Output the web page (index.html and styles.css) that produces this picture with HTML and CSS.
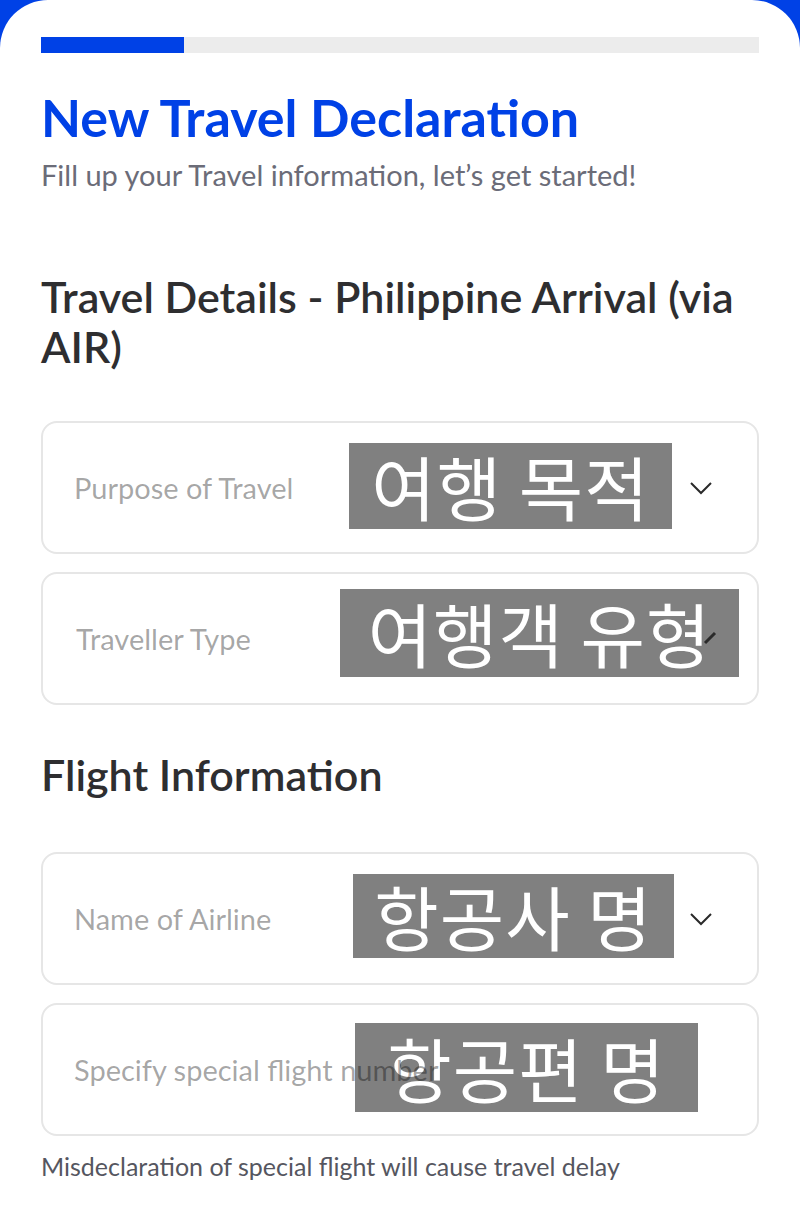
FILE: index.html
```html
<!DOCTYPE html>
<html lang="en">
<head>
<meta charset="utf-8">
<link rel="stylesheet" href="styles.css">
</head>
<body>
<div class="card">
  <div class="progress"><div class="progress-fill"></div></div>
  <h1 class="title">New Travel Declaration</h1>
  <p class="subtitle">Fill up your Travel information, let’s get started!</p>

  <h2 class="section">Travel Details - Philippine Arrival (via AIR)</h2>
  <div class="fields">
    <div class="field">
      <span class="placeholder">Purpose of Travel</span>
      <svg class="chev" viewBox="0 0 24 14"><path d="M2 2 L12 12 L22 2" /></svg>
      <span class="tag tag-1">여행 목적</span>
    </div>
    <div class="field">
      <span class="placeholder ph-2">Traveller Type</span>
      <span class="tag tag-2">여행객 유형</span>
      <svg class="chev chev-over" viewBox="0 0 24 14"><path d="M12 12 L22 2" /></svg>
    </div>
  </div>

  <h2 class="section section-2">Flight Information</h2>
  <div class="fields">
    <div class="field">
      <span class="placeholder">Name of Airline</span>
      <svg class="chev" viewBox="0 0 24 14"><path d="M2 2 L12 12 L22 2" /></svg>
      <span class="tag tag-3">항공사 명</span>
    </div>
    <div class="field">
      <span class="tag tag-4">항공편 명</span>
      <span class="placeholder ph-over">Specify special flight number</span>
    </div>
  </div>
  <p class="hint">Misdeclaration of special flight will cause travel delay</p>
</div>
</body>
</html>
```

FILE: styles.css
```css
* { box-sizing: border-box; }
html, body { margin: 0; padding: 0; }
body {
  background: #0041e6;
  font-family: "Lato", "Liberation Sans", sans-serif;
  width: 800px;
  height: 1230px;
  overflow: hidden;
}
.card {
  background: #ffffff;
  border-radius: 48px 48px 0 0;
  min-height: 1230px;
  padding: 37px 41px 0 41px;
}
.progress {
  height: 16px;
  background: #ececec;
}
.progress-fill {
  width: 143px;
  height: 16px;
  background: #0041e6;
}
.title {
  margin: 34px 0 0 0;
  font-size: 52px;
  line-height: 60px;
  font-weight: 700;
  color: #0041e6;
}
.subtitle {
  margin: 10px 0 0 0;
  font-size: 29px;
  line-height: 36px;
  color: #6b6c78;
}
.section {
  margin: 79px 0 0 0;
  font-size: 43px;
  line-height: 50px;
  font-weight: 600;
  color: #2e2e30;
}
.section-2 {
  margin-top: 45px;
}
.fields {
  display: flex;
  flex-direction: column;
  gap: 18px;
  margin-top: 49px;
}
.section-2 + .fields { margin-top: 52px; }
.field {
  position: relative;
  height: 133px;
  border: 2px solid #e6e6e6;
  border-radius: 16px;
  display: flex;
  align-items: center;
  padding: 0 44px 0 31px;
}
.placeholder {
  font-size: 29px;
  color: rgba(0, 0, 0, 0.36);
  flex: 1;
}
.ph-2 { padding-left: 2px; }
.ph-over {
  position: relative;
  z-index: 2;
}
.chev {
  width: 24px;
  height: 14px;
  fill: none;
  stroke: #2a2a2a;
  stroke-width: 2;
}
.chev-over {
  position: absolute;
  right: 40px;
  top: 57px;
  stroke-width: 3;
  z-index: 3;
}
.tag {
  position: absolute;
  background: #808080;
  color: #ffffff;
  font-family: "Noto Sans CJK KR", sans-serif;
  font-size: 70px;
  line-height: 1;
  display: flex;
  align-items: center;
  justify-content: center;
  letter-spacing: 1px;
  white-space: nowrap;
}
.tag-1 { left: 306px; top: 20px; width: 323px; height: 86px; }
.tag-2 { left: 297px; top: 15px; width: 399px; height: 88px; }
.tag-3 { left: 310px; top: 20px; width: 321px; height: 84px; }
.tag-4 { left: 312px; top: 18px; width: 343px; height: 89px; }
.hint {
  margin: 15px 0 0 0;
  font-size: 25px;
  line-height: 30px;
  color: #555660;
}
```
